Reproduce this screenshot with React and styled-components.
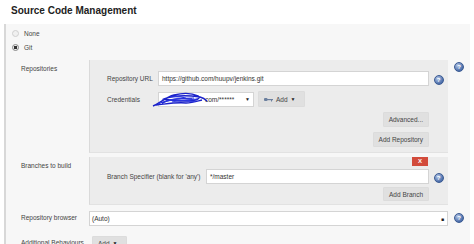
import React from 'react';
import styled, { createGlobalStyle } from 'styled-components';

const GlobalStyle = createGlobalStyle`
  html, body {
    margin: 0;
    padding: 0;
    background: #fff;
    overflow: hidden;
  }
  body {
    font-family: "Liberation Sans", Arial, sans-serif;
    color: #333;
  }
`;

const Page = styled.div`
  width: 474px;
  height: 244px;
  overflow: hidden;
`;

const Title = styled.h2`
  margin: 0;
  height: 24px;
  padding: 5px 0 0 11px;
  box-sizing: border-box;
  font-size: 10px;
  font-weight: bold;
  color: #222;
  line-height: 12px;
`;

const Section = styled.div`
  margin-left: 4px;
  width: 466px;
  box-sizing: border-box;
  border-left: 2px solid #d8d8d8;
  background: #f7f7f7;
  padding-top: 2px;
  height: 230px;
`;

const RadioRow = styled.label`
  display: flex;
  align-items: center;
  height: 14px;
  padding-left: 6px;
  font-size: 6.5px;
  color: #444;
  gap: 5px;
`;

const Radio = styled.span`
  width: 5px;
  height: 5px;
  border-radius: 50%;
  border: 1px solid ${p => (p.$checked ? '#888' : '#cfcfcf')};
  background: ${p => (p.$checked ? 'radial-gradient(circle, #333 0 1.6px, #eee 2px)' : '#f0f0f0')};
`;

const Grid = styled.div`
  display: grid;
  grid-template-columns: 83px 359px 22px;
  margin-top: 6px;
`;

const Label = styled.div`
  font-size: 6.5px;
  color: #444;
  padding-left: 15px;
  padding-top: ${p => p.$top || 0}px;
  margin-top: ${p => p.$gap || 0}px;
  line-height: 14px;
  white-space: nowrap;
`;

const HelpCell = styled.div`
  display: flex;
  justify-content: center;
  padding-top: ${p => p.$top || 0}px;
  margin-top: ${p => p.$gap || 0}px;
`;

const HelpIcon = styled.span`
  width: 8px;
  height: 8px;
  border-radius: 50%;
  background: radial-gradient(circle at 35% 30%, #b4c6e6, #4d6fab 70%);
  border: 0.5px solid #3a5a92;
  color: #fff;
  font-size: 6px;
  font-weight: bold;
  line-height: 8px;
  text-align: center;
  margin-top: 2px;
`;

const Panel = styled.div`
  background: #ececec;
  border-left: 1px solid #dadada;
  border-bottom: 1px solid #e2e2e2;
  box-sizing: border-box;
  display: flex;
  flex-direction: column;
  gap: ${p => p.$gap || 5}px;
  padding: ${p => p.$pad || '11px 0 5px 0'};
  margin-top: ${p => p.$gap2 || 0}px;
`;

const FieldRow = styled.div`
  display: grid;
  grid-template-columns: ${p => p.$labelW || 51}px 1fr 19px;
  align-items: center;
  padding-left: 17px;
`;

const FieldLabel = styled.span`
  font-size: 6.5px;
  color: #444;
`;

const TextInput = styled.div`
  height: 15px;
  box-sizing: border-box;
  background: #fff;
  border: 1px solid #d4d4d4;
  font-size: 6.5px;
  line-height: 13px;
  padding-left: 3px;
  color: #333;
  white-space: nowrap;
  overflow: hidden;
`;

const InlineHelp = styled.span`
  display: flex;
  justify-content: center;
`;

const CredRow = styled.div`
  display: flex;
  align-items: center;
  gap: 4px;
`;

const CredSelect = styled.div`
  width: 96px;
  height: 15px;
  box-sizing: border-box;
  background: #fff;
  border: 1px solid #d4d4d4;
  font-size: 6.5px;
  display: flex;
  align-items: center;
  color: #333;
  position: relative;
`;

const Scribble = styled.svg`
  position: absolute;
  left: -7px;
  top: -2px;
`;

const CredText = styled.span`
  margin-left: 46px;
  flex: 1;
`;

const Caret = styled.span`
  font-size: 5px;
  margin-right: 3px;
  color: #222;
`;

const Button = styled.button`
  font-family: "Liberation Sans", Arial, sans-serif;
  font-size: 6.5px;
  color: #444;
  background: #e0e0e0;
  border: 1px solid #dcdcdc;
  border-radius: 1px;
  height: ${p => p.$h || 15}px;
  padding: 0 ${p => p.$px || 5}px;
  display: flex;
  align-items: center;
  gap: 3px;
  cursor: pointer;
`;

const ButtonRow = styled.div`
  display: flex;
  justify-content: flex-end;
  padding-right: 19px;
`;

const RemoveRow = styled.div`
  display: flex;
  justify-content: flex-end;
  padding-right: 20px;
`;

const RemoveButton = styled.span`
  width: 16px;
  height: 9px;
  background: #d24b3b;
  color: #fff;
  font-size: 6px;
  font-weight: bold;
  text-align: center;
  line-height: 9px;
`;

const BrowserSelect = styled.div`
  height: 15px;
  box-sizing: border-box;
  background: #fff;
  border: 1px solid #d4d4d4;
  font-size: 6.5px;
  display: flex;
  align-items: center;
  justify-content: space-between;
  padding-left: 2px;
  margin-top: ${p => p.$gap || 0}px;
`;

const AddCell = styled.div`
  margin-top: ${p => p.$gap || 0}px;
  padding-left: 3px;
`;

const Help = () => <HelpIcon>?</HelpIcon>;

const KeyIcon = () => (
  <svg width="9" height="5" viewBox="0 0 9 5">
    <rect x="0" y="1" width="3.5" height="3" rx="1" fill="#6b7f9e" />
    <rect x="3" y="2" width="6" height="1.2" fill="#6b7f9e" />
    <rect x="7" y="3" width="1" height="1.5" fill="#6b7f9e" />
  </svg>
);

const App = () => (
  <Page>
    <GlobalStyle />
    <Title>Source Code Management</Title>
    <Section>
      <RadioRow><Radio />None</RadioRow>
      <RadioRow><Radio $checked />Git</RadioRow>
      <Grid>
        <Label $top={2}>Repositories</Label>
        <Panel>
          <FieldRow>
            <FieldLabel>Repository URL</FieldLabel>
            <TextInput>https://github.com/huupv/jenkins.git</TextInput>
            <InlineHelp><Help /></InlineHelp>
          </FieldRow>
          <FieldRow>
            <FieldLabel>Credentials</FieldLabel>
            <CredRow>
              <CredSelect>
                <Scribble width="56" height="18" viewBox="0 0 56 18">
                  <path
                    d="M1 15 C8 12 14 6 22 4 C30 2 40 2 46 5 C50 7 44 10 36 10 C26 10 16 9 12 8 C20 5 34 4 48 6 C52 7 54 9 55 10 M4 14 C14 13 24 11 34 12 C40 12 46 10 50 9 M10 12 C18 8 28 7 40 8"
                    fill="none"
                    stroke="#1b22c9"
                    strokeWidth="1.4"
                  />
                  <path
                    d="M6 13 C12 10 20 9 26 9 C32 9 38 11 44 10 M18 6 C24 5 30 6 34 7 M14 10 C22 7 32 7 42 7 M20 11 C28 9 36 9 46 8"
                    fill="none"
                    stroke="#2a35e0"
                    strokeWidth="1.1"
                  />
                </Scribble>
                <CredText>com/******</CredText>
                <Caret>▼</Caret>
              </CredSelect>
              <Button $h={16}><KeyIcon />Add <Caret>▼</Caret></Button>
            </CredRow>
            <span />
          </FieldRow>
          <ButtonRow><Button>Advanced...</Button></ButtonRow>
          <ButtonRow><Button>Add Repository</Button></ButtonRow>
        </Panel>
        <HelpCell><Help /></HelpCell>

        <Label $top={2} $gap={4}>Branches to build</Label>
        <Panel $gap2={4} $gap={3} $pad="0 0 3px 0">
          <RemoveRow><RemoveButton>X</RemoveButton></RemoveRow>
          <FieldRow $labelW={99}>
            <FieldLabel>Branch Specifier (blank for 'any')</FieldLabel>
            <TextInput>*/master</TextInput>
            <InlineHelp><Help /></InlineHelp>
          </FieldRow>
          <ButtonRow><Button $h={14}>Add Branch</Button></ButtonRow>
        </Panel>
        <span />

        <Label $gap={6}>Repository browser</Label>
        <BrowserSelect $gap={6}>(Auto)<Caret>■</Caret></BrowserSelect>
        <HelpCell $gap={6}><Help /></HelpCell>

        <Label $gap={10}>Additional Behaviours</Label>
        <AddCell $gap={10}><Button $h={14}>Add <Caret>▼</Caret></Button></AddCell>
        <span />
      </Grid>
    </Section>
  </Page>
);

export default App;
